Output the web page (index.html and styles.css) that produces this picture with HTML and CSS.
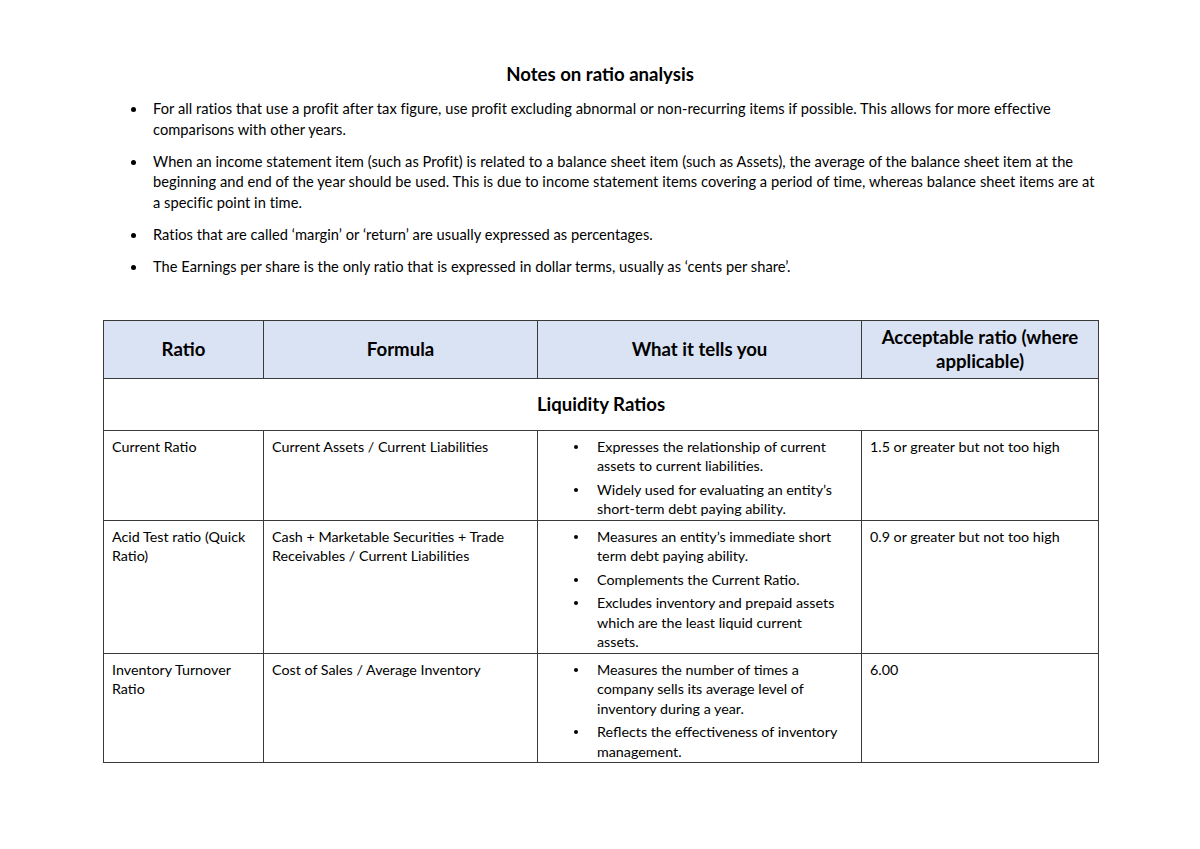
FILE: index.html
```html
<!DOCTYPE html>
<html lang="en">
<head>
<meta charset="utf-8">
<title>Notes on ratio analysis</title>
<link rel="stylesheet" href="styles.css">
</head>
<body>
<div class="page">
  <h1 class="title">Notes on ratio analysis</h1>
  <ul class="notes">
    <li>For all ratios that use a profit after tax figure, use profit excluding abnormal or non-recurring items if possible. This allows for more effective comparisons with other years.</li>
    <li>When an income statement item (such as Profit) is related to a balance sheet item (such as Assets), the average of the balance sheet item at the beginning and end of the year should be used. This is due to income statement items covering a period of time, whereas balance sheet items are at a specific point in time.</li>
    <li>Ratios that are called ‘margin’ or ‘return’ are usually expressed as percentages.</li>
    <li>The Earnings per share is the only ratio that is expressed in dollar terms, usually as ‘cents per share’.</li>
  </ul>

  <table class="ratios">
    <colgroup>
      <col class="c1"><col class="c2"><col class="c3"><col class="c4">
    </colgroup>
    <thead>
      <tr class="head">
        <th>Ratio</th>
        <th>Formula</th>
        <th>What it tells you</th>
        <th>Acceptable ratio (where applicable)</th>
      </tr>
    </thead>
    <tbody>
      <tr class="section">
        <td colspan="4">Liquidity Ratios</td>
      </tr>
      <tr>
        <td>Current Ratio</td>
        <td>Current Assets / Current Liabilities</td>
        <td>
          <ul class="points">
            <li>Expresses the relationship of current assets to current liabilities.</li>
            <li>Widely used for evaluating an entity’s short-term debt paying ability.</li>
          </ul>
        </td>
        <td>1.5 or greater but not too high</td>
      </tr>
      <tr>
        <td>Acid Test ratio (Quick Ratio)</td>
        <td>Cash + Marketable Securities + Trade Receivables / Current Liabilities</td>
        <td>
          <ul class="points">
            <li>Measures an entity’s immediate short term debt paying ability.</li>
            <li>Complements the Current Ratio.</li>
            <li>Excludes inventory and prepaid assets which are the least liquid current<br>assets.</li>
          </ul>
        </td>
        <td>0.9 or greater but not too high</td>
      </tr>
      <tr>
        <td>Inventory Turnover Ratio</td>
        <td>Cost of Sales / Average Inventory</td>
        <td>
          <ul class="points">
            <li>Measures the number of times a company sells its average level of inventory during a year.</li>
            <li>Reflects the effectiveness of inventory management.</li>
          </ul>
        </td>
        <td>6.00</td>
      </tr>
    </tbody>
  </table>
</div>
</body>
</html>
```

FILE: styles.css
```css
* { box-sizing: border-box; }

html, body {
  margin: 0;
  padding: 0;
  background: #ffffff;
}

body {
  font-family: "Lato", "Carlito", "Open Sans", sans-serif;
  color: #000000;
  font-size: 14.3px;
}

.page {
  width: 1200px;
  height: 849px;
  padding: 64px 103px 0 103px;
}

.title {
  margin: 0;
  font-size: 18.6px;
  line-height: 20px;
  font-weight: 700;
  text-align: center;
}

.notes {
  list-style: none;
  margin: 15px 0 0 0;
  padding: 0 0 0 28px;
  font-size: 14.65px;
  letter-spacing: 0.05px;
}

.notes li {
  display: flex;
  line-height: 20.6px;
  margin-bottom: 11.5px;
}

.notes li::before {
  content: "";
  flex: 0 0 auto;
  width: 5px;
  height: 5px;
  border-radius: 50%;
  background: #000;
  margin: 8px 17px 0 0;
}

.ratios {
  margin-top: 42px;
  width: 995px;
  border-collapse: collapse;
  table-layout: fixed;
}

.c1 { width: 160px; }
.c2 { width: 274px; }
.c3 { width: 324px; }
.c4 { width: 237px; }

.ratios th,
.ratios td {
  border: 1px solid #3a3a3a;
  vertical-align: top;
  text-align: left;
  padding: 6px 8px 1px 8px;
  line-height: 19.5px;
  font-weight: 400;
}

.ratios .head th {
  background: #dae3f3;
  font-weight: 700;
  font-size: 18.6px;
  line-height: 24px;
  text-align: center;
  vertical-align: middle;
  height: 58px;
  padding: 4px 10px;
}

.ratios .section td {
  height: 52px;
  text-align: center;
  vertical-align: middle;
  font-weight: 700;
  font-size: 18.6px;
  padding: 4px 8px 2px 8px;
}

.points {
  list-style: none;
  margin: 0;
  padding: 0 0 0 28px;
}

.points li {
  display: flex;
}

.points li + li {
  margin-top: 4px;
}

.points li::before {
  content: "";
  flex: 0 0 auto;
  width: 4px;
  height: 4px;
  border-radius: 50%;
  background: #000;
  margin: 8px 19px 0 0;
}
```
